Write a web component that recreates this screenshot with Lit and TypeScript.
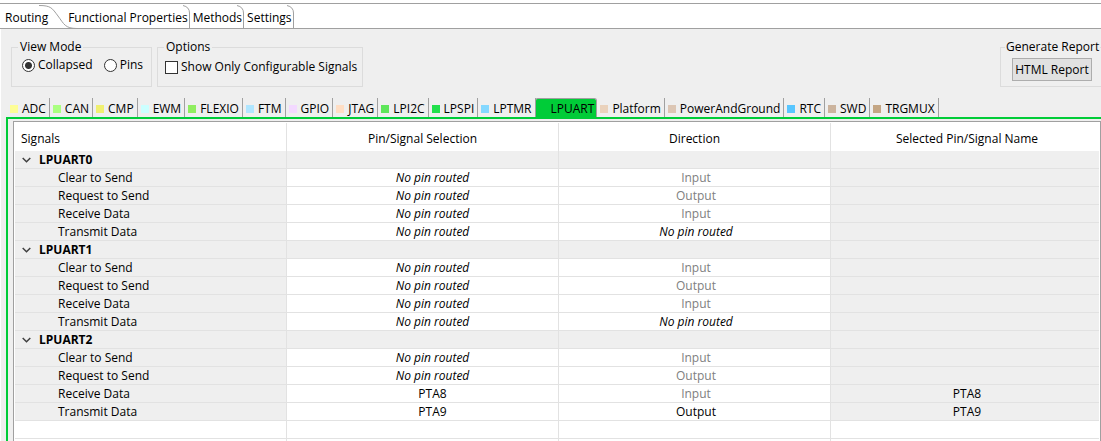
import { LitElement, html, css, svg, nothing } from "lit";
import { customElement, property, state } from "lit/decorators.js";
import { classMap } from "lit/directives/class-map.js";
import { styleMap } from "lit/directives/style-map.js";

type Cell = { text: string; kind?: "plain" | "muted" | "none" };
type Signal = { name: string; pin: Cell; direction: Cell; selected?: string };
type Group = { name: string; signals: Signal[] };

const NONE: Cell = { text: "No pin routed", kind: "none" };
const INPUT: Cell = { text: "Input", kind: "muted" };
const OUTPUT: Cell = { text: "Output", kind: "muted" };

const unrouted = (): Signal[] => [
  { name: "Clear to Send", pin: NONE, direction: INPUT },
  { name: "Request to Send", pin: NONE, direction: OUTPUT },
  { name: "Receive Data", pin: NONE, direction: INPUT },
  { name: "Transmit Data", pin: NONE, direction: NONE },
];

const GROUPS: Group[] = [
  { name: "LPUART0", signals: unrouted() },
  { name: "LPUART1", signals: unrouted() },
  {
    name: "LPUART2",
    signals: [
      ...unrouted().slice(0, 2),
      { name: "Receive Data", pin: { text: "PTA8" }, direction: INPUT, selected: "PTA8" },
      { name: "Transmit Data", pin: { text: "PTA9" }, direction: { text: "Output" }, selected: "PTA9" },
    ],
  },
];

const PERIPHERALS: [string, string][] = [
  ["ADC", "#fdfd96"],
  ["CAN", "#aaff80"],
  ["CMP", "#f0f070"],
  ["EWM", "#ccffff"],
  ["FLEXIO", "#90ee60"],
  ["FTM", "#b0e6ff"],
  ["GPIO", "#f3d9ff"],
  ["JTAG", "#ffdec4"],
  ["LPI2C", "#5ee65a"],
  ["LPSPI", "#22e04c"],
  ["LPTMR", "#84d8ff"],
  ["LPUART", "#00cc38"],
  ["Platform", "#ead2bc"],
  ["PowerAndGround", "#dcc6b4"],
  ["RTC", "#58c6ff"],
  ["SWD", "#ccb49e"],
  ["TRGMUX", "#c4a684"],
];

const VIEWS = ["Routing", "Functional Properties", "Methods", "Settings"];

@customElement("view-tabs")
class ViewTabs extends LitElement {
  static styles = css`
    :host {
      display: flex;
      height: 24px;
      border-top: 1px solid #a0a0a0;
      border-bottom: 1px solid #a0a0a0;
      background: #fff;
    }
    .tab {
      position: relative;
      flex: none;
      padding: 4px 2px 0 3px;
      border: 0;
      background: none;
      color: #000;
      font: inherit;
      line-height: 18px;
      text-align: left;
    }
    .active {
      padding-left: 5px;
      padding-right: 17px;
    }
    .curve {
      position: absolute;
      right: -12px;
      top: 0;
      width: 38px;
      height: 25px;
    }
    .edge {
      position: absolute;
      right: 0;
      top: 0;
      width: 8px;
      height: 24px;
    }
  `;

  @property({ type: Number }) active = 0;

  render() {
    return VIEWS.map(
      (name, i) => html`<button class=${classMap({ tab: true, active: i === this.active })}>
        ${name}
        ${i === this.active
          ? html`<svg class="curve" viewBox="0 0 38 25" aria-hidden="true">
              ${svg`<path d="M0 1.5 C12 1.5 13 4 19 12 C25 20 26 24.5 38 24.5" fill="none" stroke="#a0a0a0" />`}
            </svg>`
          : html`<svg class="edge" viewBox="0 0 8 24" aria-hidden="true">
              ${svg`<path d="M1 1.5 Q7.500 3 7.500 9 V24" fill="none" stroke="#a0a0a0" />`}
            </svg>`}
      </button>`
    );
  }
}

@customElement("peripheral-tabs")
class PeripheralTabs extends LitElement {
  static styles = css`
    :host {
      display: flex;
      height: 20px;
      padding-left: 6px;
      margin-bottom: -1px;
    }
    .tab {
      flex: none;
      display: flex;
      align-items: center;
      gap: 4px;
      padding: 2px 3px 0 3px;
      border: 0;
      border-right: 1px solid #a0a0a0;
      border-bottom: 1px solid #a0a0a0;
      background: none;
      color: #000;
      font: inherit;
      line-height: 18px;
    }
    .swatch {
      width: 8px;
      height: 8px;
    }
    .active {
      margin-left: -1px;
      padding-right: 2px;
      border: 1px solid #a0a0a0;
      border-bottom-color: #00cc38;
      border-radius: 3px 3px 0 0;
      background: #00cc38;
    }
    .rest {
      flex: 1;
      border-bottom: 1px solid #a0a0a0;
    }
  `;

  @property() active = "LPUART";

  render() {
    return html`${PERIPHERALS.map(
        ([name, color]) => html`<button
          class=${classMap({ tab: true, active: name === this.active })}
        >
          <span class="swatch" style=${styleMap({ background: color })}></span>${name}
        </button>`
      )}<span class="rest"></span>`;
  }
}

@customElement("signal-tree")
class SignalTree extends LitElement {
  static styles = css`
    :host {
      display: flex;
      flex-direction: column;
      flex: 1;
      padding: 1px 1px 0;
      border: 1px solid #a0a0a0;
      border-bottom: 0;
      background: #fff;
    }
    .grid {
      width: 100%;
      table-layout: fixed;
      border-collapse: separate;
      border-spacing: 0;
    }
    .col {
      width: 272px;
    }
    th,
    td {
      box-sizing: border-box;
      height: 18px;
      padding: 0;
      border-right: 1px solid #e2e2e2;
      border-bottom: 1px solid #e2e2e2;
      line-height: 17px;
      font-weight: 400;
      text-align: center;
      white-space: nowrap;
    }
    td {
      padding-left: 3px;
    }
    th:last-child,
    td:last-child {
      padding-left: 4px;
      border-right: 0;
    }
    .head th {
      height: 28px;
      border-bottom: 0;
      padding-top: 3px;
    }
    .head .first {
      padding-left: 6px;
    }
    .first {
      text-align: left;
    }
    .shade {
      background: #efefef;
    }
    .group {
      display: flex;
      align-items: center;
      gap: 8px;
      padding: 0 0 0 7px;
      border: 0;
      background: none;
      color: #000;
      font: inherit;
      font-weight: 700;
      line-height: 17px;
    }
    .chevron {
      width: 9px;
      height: 6px;
    }
    .signal {
      padding-left: 43px;
    }
    .pin {
      padding-left: 20px;
    }
    .none {
      font-style: italic;
    }
    .muted {
      color: #808080;
    }
    .filler {
      flex: 1;
      display: grid;
      grid-template-columns: repeat(3, 272px) 1fr;
    }
    .blank {
      border-right: 1px solid #e2e2e2;
    }
    .blank:last-child {
      border-right: 0;
    }
  `;

  @state() private closed = new Set<string>();

  private toggle(name: string) {
    const next = new Set(this.closed);
    if (!next.delete(name)) next.add(name);
    this.closed = next;
  }

  private row(s: Signal) {
    return html`<tr>
      <th class="first shade signal" scope="row">${s.name}</th>
      <td class="pin ${s.pin.kind ?? "plain"}">${s.pin.text}</td>
      <td class=${s.direction.kind ?? "plain"}>${s.direction.text}</td>
      <td class="shade">${s.selected ?? nothing}</td>
    </tr>`;
  }

  render() {
    return html`<table class="grid">
        <colgroup>
          <col class="col" /><col class="col" /><col class="col" /><col />
        </colgroup>
        <thead>
          <tr class="head">
            <th class="first" scope="col">Signals</th>
            <th scope="col">Pin/Signal Selection</th>
            <th scope="col">Direction</th>
            <th scope="col">Selected Pin/Signal Name</th>
          </tr>
        </thead>
        <tbody>
          ${GROUPS.map(
            (g) => html`<tr>
                <th class="first shade" scope="row">
                  <button class="group" @click=${() => this.toggle(g.name)}>
                    <svg class="chevron" viewBox="0 0 9 6" aria-hidden="true">
                      <path d="M0.700 1 L4.500 4.800 L8.300 1" fill="none" stroke="#404040" stroke-width="1.500" />
                    </svg>
                    ${g.name}
                  </button>
                </th>
                <td class="shade"></td>
                <td class="shade"></td>
                <td class="shade"></td>
              </tr>
              ${this.closed.has(g.name) ? nothing : g.signals.map((s) => this.row(s))}`
          )}
          <tr>
            <td></td>
            <td></td>
            <td></td>
            <td></td>
          </tr>
        </tbody>
      </table>
      <div class="filler">
        <span class="blank"></span><span class="blank"></span><span class="blank"></span
        ><span class="blank"></span>
      </div>`;
  }
}

@customElement("app-root")
class AppRoot extends LitElement {
  static styles = css`
    :host {
      display: flex;
      flex-direction: column;
      box-sizing: border-box;
      min-height: 100vh;
      padding: 3px 0 0 0;
      overflow: hidden;
      background: #fff;
      color: #000;
      font: 12px/18px "Segoe UI", "Open Sans", "Noto Sans", sans-serif;
      white-space: nowrap;
    }
    .page {
      flex: 1;
      display: flex;
      flex-direction: column;
      margin-left: 1px;
      background: #efefef;
    }
    .options {
      display: flex;
      gap: 5px;
      padding: 9px 0 11px 10px;
    }
    .box {
      box-sizing: border-box;
      display: flex;
      height: 49px;
      min-width: 0;
      margin: 0;
      padding: 0 8px;
      border: 1px solid #dcdcdc;
    }
    .box legend {
      padding: 0 2px;
      margin-left: -2px;
      line-height: 18px;
    }
    .mode {
      width: 141px;
    }
    .choices {
      display: flex;
      gap: 11px;
      margin-left: 2px;
    }
    .show {
      width: 206px;
    }
    .report {
      width: 101px;
      margin-left: auto;
      padding: 0 0 0 11px;
      border-right: 0;
    }
    .box.report legend {
      margin-left: -7px;
      padding: 0 1px;
    }
    .field {
      display: flex;
      align-items: center;
      gap: 3px;
      height: 18px;
    }
    .show .field {
      margin-top: 2px;
    }
    .radio,
    .check {
      appearance: none;
      flex: none;
      box-sizing: border-box;
      width: 13px;
      height: 13px;
      margin: 0;
      border: 1px solid #333;
      background: #fff;
    }
    .show .check {
      margin-left: -1px;
    }
    .radio {
      border-radius: 50%;
    }
    .radio:checked {
      background: radial-gradient(circle, #333 3px, #fff 4px);
    }
    .action {
      box-sizing: border-box;
      width: 80px;
      height: 23px;
      margin: 2px 0 0;
      padding: 0;
      border: 1px solid #adadad;
      background: #e1e1e1;
      color: #000;
      font: inherit;
    }
    .panel {
      flex: 1;
      display: flex;
      margin-left: 5px;
      padding: 2px 0 0 5px;
      border-top: 2px solid #00cc38;
      border-left: 2px solid #00cc38;
    }
  `;

  render() {
    return html`
      <view-tabs></view-tabs>
      <main class="page">
        <div class="options">
          <fieldset class="box mode">
            <legend>View Mode</legend>
            <div class="choices">
              <label class="field"><input class="radio" type="radio" name="mode" checked />Collapsed</label>
              <label class="field"><input class="radio" type="radio" name="mode" />Pins</label>
            </div>
          </fieldset>
          <fieldset class="box show">
            <legend>Options</legend>
            <label class="field"><input class="check" type="checkbox" />Show Only Configurable Signals</label>
          </fieldset>
          <fieldset class="box report">
            <legend>Generate Report</legend>
            <button class="action">HTML Report</button>
          </fieldset>
        </div>
        <peripheral-tabs></peripheral-tabs>
        <div class="panel"><signal-tree></signal-tree></div>
      </main>
    `;
  }
}
